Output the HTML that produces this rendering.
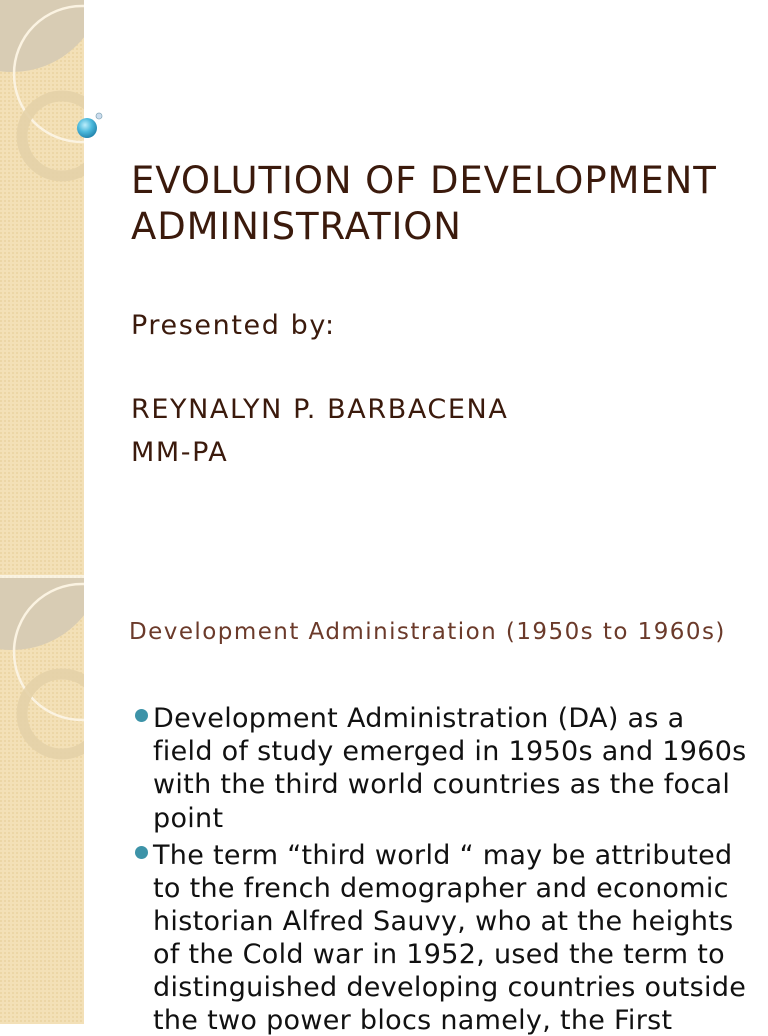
<!DOCTYPE html>
<html><head><meta charset="utf-8"><style>
body{margin:0;width:768px;height:1024px;overflow:hidden;background:#fff;font-family:"DejaVu Sans","Liberation Sans",sans-serif;position:relative}
.t{position:absolute;white-space:nowrap;line-height:1}
.h{color:#3b1a0c;font-size:37px;left:131px;letter-spacing:0.9px}
.p{color:#3b1a0c;font-size:27px;left:131px;letter-spacing:1.6px}
.b{color:#111;font-size:27px;left:153px;letter-spacing:0.3px}
.dot{position:absolute;width:13px;height:13px;border-radius:50%;background:#3d93a8;left:135px}
</style></head><body>
<svg width="110" height="1024" style="position:absolute;left:0;top:0">
<defs>
<pattern id="pt" width="4" height="4" patternUnits="userSpaceOnUse"><rect width="4" height="4" fill="#f3e0b7"/><rect width="2" height="2" fill="#ecd6a6"/></pattern>
<clipPath id="c1"><rect x="0" y="0" width="84" height="575"/></clipPath>
<clipPath id="c2"><rect x="0" y="578" width="84" height="446"/></clipPath>
<radialGradient id="ball" cx="0.4" cy="0.35" r="0.7"><stop offset="0" stop-color="#bdeefb"/><stop offset="0.5" stop-color="#4bb9dc"/><stop offset="1" stop-color="#1f7fa8"/></radialGradient>
<g id="deco">
<circle cx="12" cy="-20" r="92" fill="#d8ccb4"/>
<circle cx="82" cy="74" r="68" fill="none" stroke="#fbf3e2" stroke-width="2.5"/>
<circle cx="62" cy="136" r="40" fill="none" stroke="#e4d1a9" stroke-width="11" opacity="0.9"/>
</g>
</defs>
<rect width="84" height="1024" fill="url(#pt)"/>
<g clip-path="url(#c1)"><use href="#deco"/></g>
<g clip-path="url(#c2)"><use href="#deco" y="578"/></g>
<rect x="0" y="575" width="84" height="3" fill="#fff" opacity="0.6"/>
<circle cx="87" cy="128" r="10" fill="url(#ball)"/>
<circle cx="99" cy="116" r="3" fill="#cde" stroke="#8ab" stroke-width="0.8"/>
</svg>
<div class="t h" style="top:162px">EVOLUTION OF DEVELOPMENT</div>
<div class="t h" style="top:208px">ADMINISTRATION</div>
<div class="t p" style="top:312px">Presented by:</div>
<div class="t p" style="top:396px">REYNALYN P. BARBACENA</div>
<div class="t p" style="top:439px">MM-PA</div>
<div class="t" style="left:129px;top:621px;font-size:23px;color:#6b3a2a;letter-spacing:1.45px">Development Administration (1950s to 1960s)</div>
<div class="dot" style="top:709px"></div>
<div class="dot" style="top:846px"></div>
<div class="t b" style="top:705px">Development Administration (DA) as a</div>
<div class="t b" style="top:738px">field of study emerged in 1950s and 1960s</div>
<div class="t b" style="top:771px">with the third world countries as the focal</div>
<div class="t b" style="top:805px">point</div>
<div class="t b" style="top:842px">The term “third world “ may be attributed</div>
<div class="t b" style="top:875px">to the french demographer and economic</div>
<div class="t b" style="top:908px">historian Alfred Sauvy, who at the heights</div>
<div class="t b" style="top:941px">of the Cold war in 1952, used the term to</div>
<div class="t b" style="top:974px">distinguished developing countries outside</div>
<div class="t b" style="top:1007px">the two power blocs namely, the First</div>
</body></html>
